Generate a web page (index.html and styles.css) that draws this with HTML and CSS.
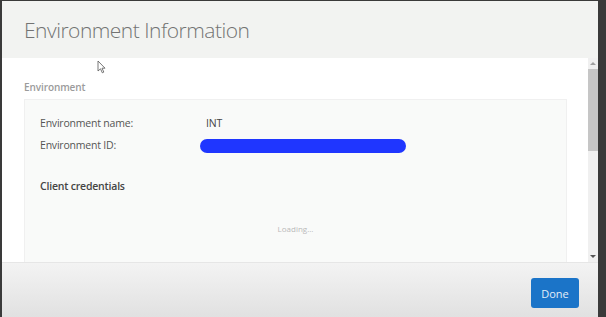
FILE: index.html
```html
<!DOCTYPE html>
<html lang="en">
<head>
    <meta charset="UTF-8">
    <meta name="viewport" content="width=device-width, initial-scale=1.0">
    <title>Environment Information</title>
    <link rel="stylesheet" href="styles.css">
</head>
<body>

<div class="modal">
    <div class="modal-header">
        <h1>Environment Information</h1>
    </div>

    <div class="modal-body">
        <div class="content">
            <h4 class="section-title">Environment</h4>
            <div class="panel">
                <div class="row">
                    <span class="label">Environment name:</span>
                    <span class="value">INT</span>
                </div>
                <div class="row">
                    <span class="label">Environment ID:</span>
                    <span class="redacted"></span>
                </div>
                <h5 class="sub-title">Client credentials</h5>
                <p class="loading">Loading...</p>
            </div>
        </div>
        <div class="scrollbar">
            <span class="arrow up"></span>
            <span class="thumb"></span>
            <span class="track"></span>
            <span class="arrow down"></span>
        </div>
    </div>

    <div class="modal-footer">
        <button type="button">Done</button>
    </div>

    <!-- mouse pointer -->
    <svg class="cursor" width="9" height="14" viewBox="0 0 9 14">
        <path d="M1 1 L1 11 L3.5 8.8 L5.3 12.8 L6.8 12.1 L5 8.2 L8 8.2 Z" fill="#fff" stroke="#555" stroke-width="0.8"/>
    </svg>
</div>

</body>
</html>
```

FILE: styles.css
```css
body {
    margin: 0;
    background-color: #3a3a3a;
    font-family: "Open Sans", Arial, sans-serif;
    height: 317px;
    overflow: hidden;
}

.modal {
    position: relative;
    margin: 1px 8px 0 2px;
    height: 316px;
    display: flex;
    flex-direction: column;
    background-color: #fff;
}

.modal-header {
    height: 57px;
    background-color: #f2f3f1;
    display: flex;
    align-items: center;
    padding-left: 22px;
}

.modal-header h1 {
    margin: 0;
    font-size: 21px;
    font-weight: 300;
    color: #737373;
    letter-spacing: -0.5px;
}

.modal-body {
    height: 204px;
    display: flex;
    overflow: hidden;
}

.content {
    flex: 1;
    padding: 22px 20px 0 22px;
}

.section-title {
    margin: 0 0 5px 0;
    font-size: 10px;
    font-weight: 600;
    color: #9b9b9b;
    line-height: 14px;
    letter-spacing: -0.1px;
}

.panel {
    background-color: #f9faf9;
    border: 1px solid #f0f0f0;
    border-bottom: none;
    height: 200px;
    padding: 12px 15px 0 15px;
}

.row {
    display: flex;
    height: 22px;
    align-items: center;
    font-size: 10.5px;
    color: #555;
    letter-spacing: -0.2px;
}

.label {
    width: 166px;
}

.value {
    color: #444;
}

.redacted {
    display: inline-block;
    width: 206px;
    height: 14px;
    margin-left: -6px;
    margin-top: 2px;
    border-radius: 7px;
    background-color: #1f36ff;
}

.sub-title {
    margin: 23px 0 0 0;
    font-size: 10.5px;
    font-weight: 600;
    color: #444;
    line-height: 14px;
    letter-spacing: -0.2px;
}

.loading {
    margin: 30px 0 0 0;
    text-align: center;
    font-size: 8px;
    color: #b9b9b9;
}

.scrollbar {
    width: 10px;
    margin-left: 1px;
    background-color: #f0f0f0;
    display: flex;
    flex-direction: column;
    align-items: center;
}

.arrow {
    width: 0;
    height: 0;
    border-left: 3px solid transparent;
    border-right: 3px solid transparent;
    margin: 4px 0;
}

.arrow.up {
    border-bottom: 3px solid #a0a0a0;
}

.arrow.down {
    border-top: 3px solid #555;
}

.thumb {
    width: 10px;
    height: 82px;
    background-color: #c6c6c6;
}

.track {
    flex: 1;
}

.modal-footer {
    flex: 1;
    border-top: 1px solid #e6e6e6;
    background: linear-gradient(#f3f3f3, #e1e1e1);
    display: flex;
    justify-content: flex-end;
    align-items: flex-start;
    padding: 15px 19px 0 0;
}

.modal-footer button {
    width: 48px;
    height: 30px;
    border: none;
    border-radius: 3px;
    background-color: #1b74c8;
    color: #e3edf8;
    font-family: "Open Sans", Arial, sans-serif;
    font-size: 11px;
    cursor: pointer;
}

.cursor {
    position: absolute;
    left: 95px;
    top: 59px;
}
```
